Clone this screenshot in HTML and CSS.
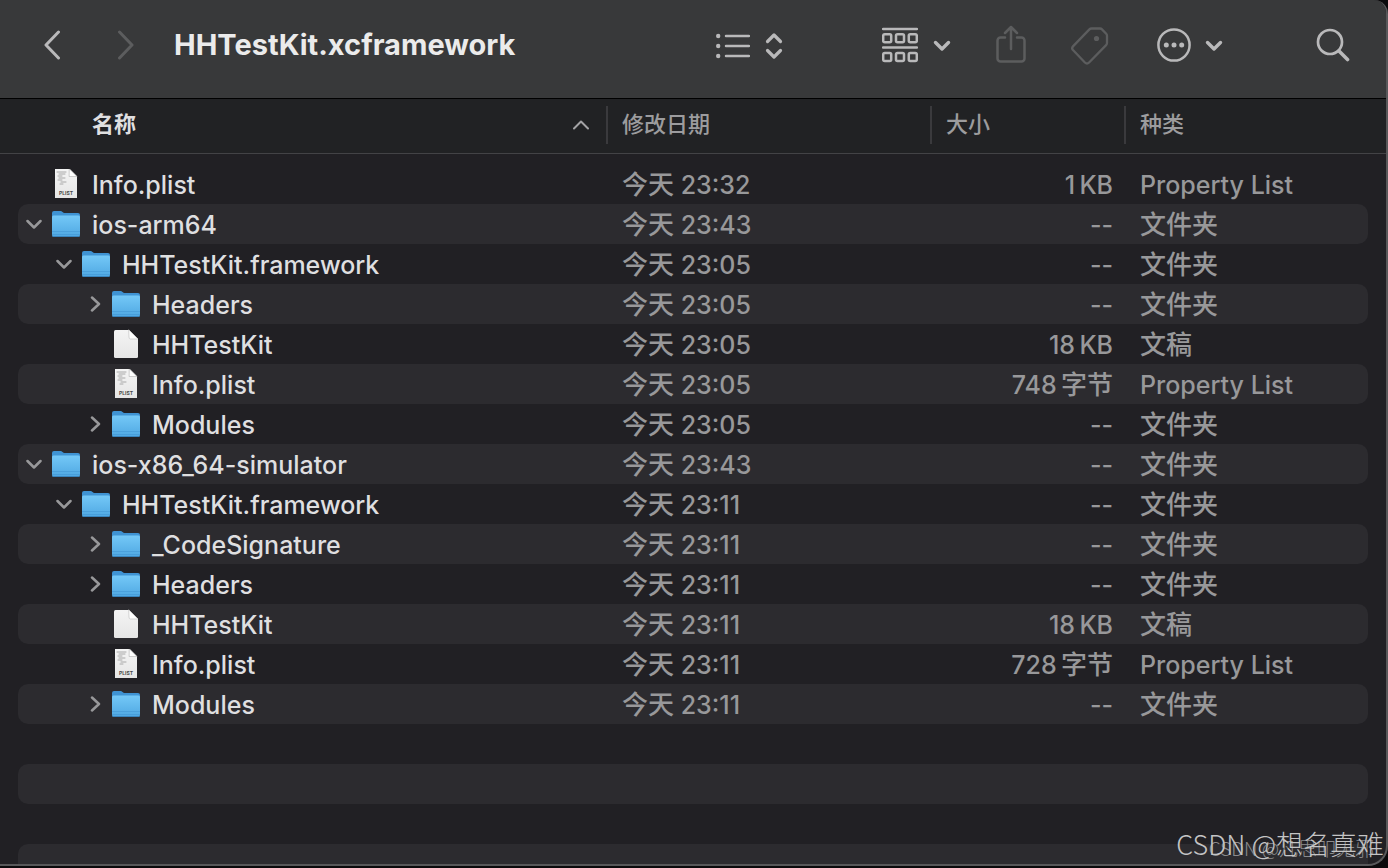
FILE: index.html
```
<!DOCTYPE html>
<html lang="zh-CN">
<head>
    <meta charset="UTF-8">
    <meta name="viewport" content="width=device-width, initial-scale=1.0">
    <title>HHTestKit.xcframework</title>
    <link rel="stylesheet" href="styles.css">
</head>
<body>
    <!-- shared icons -->
    <svg width="0" height="0" class="defs" aria-hidden="true">
        <defs>
            <linearGradient id="folder-fill" x1="0" y1="0" x2="0" y2="1">
                <stop offset="0" stop-color="#74c8f7" />
                <stop offset="1" stop-color="#4fa8e2" />
            </linearGradient>
            <linearGradient id="paper-fill" x1="0" y1="0" x2="0" y2="1">
                <stop offset="0" stop-color="#f4f4f4" />
                <stop offset="1" stop-color="#e6e6e6" />
            </linearGradient>
            <symbol id="folder" viewBox="0 0 28 30">
                <path d="M0 4a2 2 0 0 1 2-2h6.500c1.500 0 2.500 2 4 2H26a2 2 0 0 1 2 2v4H0z" fill="#3f93d3" />
                <path d="M0 8a1.500 1.500 0 0 1 1.500-1.500h25A1.500 1.500 0 0 1 28 8V26a2 2 0 0 1-2 2H2a2 2 0 0 1-2-2z" fill="url(#folder-fill)" />
                <path d="M0 22.500h28M0 25.500h28" stroke="#4196d3" stroke-width="0.600" />
                <path d="M1 27.500h26" stroke="#3883bd" />
            </symbol>
            <symbol id="paper" viewBox="0 0 28 30">
                <path d="M3.500 1H17l9 9v17.500A1.500 1.500 0 0 1 24.500 29h-21A1.500 1.500 0 0 1 2 27.500v-25A1.500 1.500 0 0 1 3.500 1z" fill="url(#paper-fill)" />
                <path d="M17 1l9 9h-7.500A1.500 1.500 0 0 1 17 8.500z" fill="#fff" stroke="#c4c4c4" stroke-width="0.700" />
            </symbol>
            <symbol id="plist" viewBox="0 0 28 30">
                <path d="M3 0h14.500l7.500 7.500V29H3z" fill="url(#paper-fill)" />
                <path d="M17.500 0l7.500 7.500h-7.500z" fill="#fff" stroke="#bbb" stroke-width="0.700" />
                <path d="M5 3h9M7 5h6M6 7h4M7 9h6M6 11h4M9 13h5M8 15h3" stroke="#a8a8a8" stroke-width="1" />
                <text x="14" y="26" text-anchor="middle" class="plist-label">PLIST</text>
            </symbol>
            <symbol id="open" viewBox="0 0 16 16">
                <path d="M1.500 5L8 11.500 14.500 5" />
            </symbol>
            <symbol id="closed" viewBox="0 0 16 16">
                <path d="M6 1.500L13 8l-7 6.500" />
            </symbol>
        </defs>
    </svg>

    <main class="window">
        <header class="toolbar">
            <button class="nav-btn" aria-label="Back">
                <svg width="20" height="32" viewBox="0 0 20 32"><path d="M14.500 3L2 16l12.500 13" stroke-width="3" /></svg>
            </button>
            <button class="nav-btn forward disabled" aria-label="Forward" disabled>
                <svg width="20" height="32" viewBox="0 0 20 32"><path d="M5.500 3L18 16 5.500 29" stroke-width="3" /></svg>
            </button>
            <h1>HHTestKit.xcframework</h1>
            <div class="tools">
                <button class="view-btn" aria-label="View">
                    <svg width="34" height="28" viewBox="0 0 34 28">
                        <path d="M10 5h23M10 15h23M10 25h23" stroke-width="2.500" />
                        <g class="solid"><circle cx="2.200" cy="5" r="2.200" /><circle cx="2.200" cy="15" r="2.200" /><circle cx="2.200" cy="25" r="2.200" /></g>
                    </svg>
                    <svg width="18" height="30" viewBox="0 0 18 30"><path d="M2.500 11.500L9 5l6.500 6.500M2.500 20.500L9 27l6.500-6.500" stroke-width="3.200" /></svg>
                </button>
                <button class="group-btn" aria-label="Group">
                    <svg width="36" height="36" viewBox="0 0 36 36">
                        <path d="M1 2h34M1 20.500h34" stroke-width="2.500" />
                        <g stroke-width="2.500">
                            <rect x="1.200" y="7.200" width="8" height="8" rx="1.500" /><rect x="14" y="7.200" width="8" height="8" rx="1.500" /><rect x="26.800" y="7.200" width="8" height="8" rx="1.500" />
                            <rect x="1.200" y="26" width="8" height="8" rx="1.500" /><rect x="14" y="26" width="8" height="8" rx="1.500" /><rect x="26.800" y="26" width="8" height="8" rx="1.500" />
                        </g>
                    </svg>
                    <svg width="18" height="14" viewBox="0 0 18 14"><path d="M2.500 4.500L9 11l6.500-6.500" stroke-width="3.400" /></svg>
                </button>
                <button class="share-btn disabled" aria-label="Share" disabled>
                    <svg width="30" height="40" viewBox="0 0 30 40">
                        <path d="M9 12.500H4.500a3 3 0 0 0-3 3v18a3 3 0 0 0 3 3h21a3 3 0 0 0 3-3v-18a3 3 0 0 0-3-3H21M15 24V2M9 8l6-6 6 6" stroke-width="2.500" />
                    </svg>
                </button>
                <button class="tag-btn disabled" aria-label="Tags" disabled>
                    <svg width="38" height="40" viewBox="0 0 38 40">
                        <path d="M20.500 3.500H29a3 3 0 0 1 2 .900l4.200 4.300a3 3 0 0 1 .800 2v7.300a3 3 0 0 1-.900 2.100L18.100 37.500a3 3 0 0 1-4.200 0L2.200 25.300a3 3 0 0 1 0-4.200L18.400 4.400a3 3 0 0 1 2.100-.900z" stroke-width="2.300" />
                        <circle class="solid" cx="25.500" cy="13.500" r="2.600" />
                    </svg>
                </button>
                <button class="more-btn" aria-label="More">
                    <svg width="34" height="34" viewBox="0 0 34 34">
                        <circle cx="17" cy="17" r="15.600" stroke-width="2.500" />
                        <g class="solid"><circle cx="9.300" cy="17" r="2.500" /><circle cx="17" cy="17" r="2.500" /><circle cx="24.700" cy="17" r="2.500" /></g>
                    </svg>
                    <svg width="18" height="14" viewBox="0 0 18 14"><path d="M2.500 4.500L9 11l6.500-6.500" stroke-width="3.400" /></svg>
                </button>
                <button class="search-btn" aria-label="Search">
                    <svg width="34" height="34" viewBox="0 0 34 34">
                        <circle cx="14" cy="14" r="12" stroke-width="2.700" />
                        <path d="M23 23l8.500 8.500" stroke-width="3.600" />
                    </svg>
                </button>
            </div>
        </header>

        <table class="files">
            <colgroup>
                <col class="col-name">
                <col class="col-date">
                <col class="col-size">
                <col>
            </colgroup>
            <thead>
                <tr>
                    <th class="sorted"><div class="th-inner">名称<svg width="16" height="12" viewBox="0 0 16 12"><path d="M1 10.500l7-7 7 7" /></svg></div></th>
                    <th><div class="th-inner">修改日期</div></th>
                    <th><div class="th-inner">大小</div></th>
                    <th><div class="th-inner">种类</div></th>
                </tr>
            </thead>
            <tbody>
                <tr>
                    <td><div class="name"><span class="toggle"></span><svg class="icon"><use href="#plist" /></svg>Info.plist</div></td>
                    <td><span class="zh">今天</span> 23:32</td><td>1&#8201;KB</td><td>Property List</td>
                </tr>
                <tr>
                    <td><div class="name"><button class="toggle" aria-label="Collapse"><svg><use href="#open" /></svg></button><svg class="icon"><use href="#folder" /></svg>ios-arm64</div></td>
                    <td><span class="zh">今天</span> 23:43</td><td>--</td><td><span class="zh">文件夹</span></td>
                </tr>
                <tr>
                    <td><div class="name depth-1"><button class="toggle" aria-label="Collapse"><svg><use href="#open" /></svg></button><svg class="icon"><use href="#folder" /></svg>HHTestKit.framework</div></td>
                    <td><span class="zh">今天</span> 23:05</td><td>--</td><td><span class="zh">文件夹</span></td>
                </tr>
                <tr>
                    <td><div class="name depth-2"><button class="toggle" aria-label="Expand"><svg><use href="#closed" /></svg></button><svg class="icon"><use href="#folder" /></svg>Headers</div></td>
                    <td><span class="zh">今天</span> 23:05</td><td>--</td><td><span class="zh">文件夹</span></td>
                </tr>
                <tr>
                    <td><div class="name depth-2"><span class="toggle"></span><svg class="icon"><use href="#paper" /></svg>HHTestKit</div></td>
                    <td><span class="zh">今天</span> 23:05</td><td>18&#8201;KB</td><td><span class="zh">文稿</span></td>
                </tr>
                <tr>
                    <td><div class="name depth-2"><span class="toggle"></span><svg class="icon"><use href="#plist" /></svg>Info.plist</div></td>
                    <td><span class="zh">今天</span> 23:05</td><td>748&#8201;<span class="zh">字节</span></td><td>Property List</td>
                </tr>
                <tr>
                    <td><div class="name depth-2"><button class="toggle" aria-label="Expand"><svg><use href="#closed" /></svg></button><svg class="icon"><use href="#folder" /></svg>Modules</div></td>
                    <td><span class="zh">今天</span> 23:05</td><td>--</td><td><span class="zh">文件夹</span></td>
                </tr>
                <tr>
                    <td><div class="name"><button class="toggle" aria-label="Collapse"><svg><use href="#open" /></svg></button><svg class="icon"><use href="#folder" /></svg>ios-x86_64-simulator</div></td>
                    <td><span class="zh">今天</span> 23:43</td><td>--</td><td><span class="zh">文件夹</span></td>
                </tr>
                <tr>
                    <td><div class="name depth-1"><button class="toggle" aria-label="Collapse"><svg><use href="#open" /></svg></button><svg class="icon"><use href="#folder" /></svg>HHTestKit.framework</div></td>
                    <td><span class="zh">今天</span> 23:11</td><td>--</td><td><span class="zh">文件夹</span></td>
                </tr>
                <tr>
                    <td><div class="name depth-2"><button class="toggle" aria-label="Expand"><svg><use href="#closed" /></svg></button><svg class="icon"><use href="#folder" /></svg>_CodeSignature</div></td>
                    <td><span class="zh">今天</span> 23:11</td><td>--</td><td><span class="zh">文件夹</span></td>
                </tr>
                <tr>
                    <td><div class="name depth-2"><button class="toggle" aria-label="Expand"><svg><use href="#closed" /></svg></button><svg class="icon"><use href="#folder" /></svg>Headers</div></td>
                    <td><span class="zh">今天</span> 23:11</td><td>--</td><td><span class="zh">文件夹</span></td>
                </tr>
                <tr>
                    <td><div class="name depth-2"><span class="toggle"></span><svg class="icon"><use href="#paper" /></svg>HHTestKit</div></td>
                    <td><span class="zh">今天</span> 23:11</td><td>18&#8201;KB</td><td><span class="zh">文稿</span></td>
                </tr>
                <tr>
                    <td><div class="name depth-2"><span class="toggle"></span><svg class="icon"><use href="#plist" /></svg>Info.plist</div></td>
                    <td><span class="zh">今天</span> 23:11</td><td>728&#8201;<span class="zh">字节</span></td><td>Property List</td>
                </tr>
                <tr>
                    <td><div class="name depth-2"><button class="toggle" aria-label="Expand"><svg><use href="#closed" /></svg></button><svg class="icon"><use href="#folder" /></svg>Modules</div></td>
                    <td><span class="zh">今天</span> 23:11</td><td>--</td><td><span class="zh">文件夹</span></td>
                </tr>
                <!-- empty stripes below the list -->
                <tr><td></td><td></td><td></td><td></td></tr>
                <tr><td></td><td></td><td></td><td></td></tr>
                <tr><td></td><td></td><td></td><td></td></tr>
                <tr><td></td><td></td><td></td><td></td></tr>
            </tbody>
        </table>
    </main>

    <div class="watermark small">CSDN @凡思叩无邪</div>
    <div class="watermark">CSDN @想名真难</div>
</body>
</html>
```
FILE: styles.css
```
* {
    box-sizing: border-box;
}
body {
    margin: 0;
    height: 100vh;
    padding-bottom: 2px;
    overflow: hidden;
    background-color: #0b0a0c;
    color: #dfdfe0;
    font-family: Inter, "Noto Sans CJK SC", sans-serif;
    font-size: 25px;
    font-weight: 500;
}
.defs {
    position: absolute;
}
svg {
    fill: none;
    stroke-linecap: round;
    stroke-linejoin: round;
    flex-shrink: 0;
}
button {
    display: flex;
    align-items: center;
    padding: 0;
    border: none;
    background: none;
    color: inherit;
}
.window {
    height: 100%;
    overflow: hidden;
    background-color: #212024;
    border-right: 2px solid #58585a;
    border-bottom: 2px solid #58585a;
    border-radius: 0 14px 20px 0;
}

/* toolbar */
.toolbar {
    display: flex;
    align-items: center;
    height: 99px;
    padding: 0 36px 8px 44px;
    background-color: #38393a;
    border-bottom: 1px solid #000;
    color: #b9b9ba;
}
.toolbar svg {
    stroke: currentColor;
}
.toolbar .solid {
    fill: currentColor;
    stroke: none;
}
.toolbar .disabled {
    color: #5c5d5e;
}
.forward {
    margin-left: 50px;
}
.toolbar h1 {
    margin: 0 0 0 40px;
    color: #ebebeb;
    font-size: 29px;
    line-height: 40px;
    font-weight: 700;
}
.tools {
    display: flex;
    align-items: center;
    margin-left: auto;
}
.view-btn {
    gap: 15px;
}
.group-btn {
    gap: 15px;
    margin-left: 99px;
}
.share-btn {
    margin-left: 45px;
}
.tag-btn {
    margin-left: 45px;
}
.more-btn {
    gap: 14px;
    margin-left: 48px;
}
.search-btn {
    margin-left: 93px;
}

/* file list */
.files {
    width: 100%;
    table-layout: fixed;
    border-collapse: separate;
    border-spacing: 0;
}
.col-name {
    width: 606px;
}
.col-date {
    width: 324px;
}
.col-size {
    width: 194px;
}
.files th {
    height: 55px;
    padding: 0 0 2px;
    background-color: #212224;
    border-bottom: 1px solid #434346;
    color: #9c9c9e;
    font-size: 22px;
    line-height: 36px;
    font-weight: 500;
    text-align: left;
}
.th-inner {
    display: flex;
    align-items: center;
    justify-content: space-between;
    height: 38px;
    padding: 0 0 2px 14px;
    border-left: 2px solid #3a3a3d;
}
.files .sorted {
    color: #dfdfe0;
    font-weight: 700;
}
.sorted .th-inner {
    padding: 0 17px 2px 92px;
    border-left: none;
}
.sorted svg {
    stroke: #a3a3a5;
    stroke-width: 2;
}
.files tbody::before {
    content: "";
    display: block;
    height: 10px;
}
.files td {
    height: 40px;
    padding: 2px 0 0 16px;
    color: #98989a;
    line-height: 38px;
    white-space: nowrap;
}
.files td:first-child {
    padding: 0;
    border-left: 18px solid transparent;
    border-radius: 28px 0 0 28px / 10px 0 0 10px;
    background-clip: padding-box;
    color: #dfdfe0;
}
.files td:nth-child(3) {
    padding-right: 11px;
    text-align: right;
}
.files td:last-child {
    border-right: 18px solid transparent;
    border-radius: 0 28px 28px 0 / 0 10px 10px 0;
    background-clip: padding-box;
}
.files tbody tr:nth-child(even) td {
    background-color: #2c2b2f;
}
.name {
    display: flex;
    align-items: center;
    height: 40px;
    padding: 2px 0 0 8px;
}
.depth-1 {
    padding-left: 38px;
}
.depth-2 {
    padding-left: 68px;
}
.toggle {
    width: 16px;
    height: 16px;
    margin: 0 10px 2px 0;
}
.toggle svg {
    width: 16px;
    height: 16px;
    stroke: #98989a;
    stroke-width: 2.5px;
}
.icon {
    width: 28px;
    height: 30px;
    margin: 0 12px 2px 0;
}
.plist-label {
    fill: #4a4a4a;
    font-size: 5px;
    font-weight: 700;
}
.zh {
    font-size: 26px;
    line-height: 20px;
}

/* watermarks lie over the window corner */
.watermark {
    position: absolute;
    right: 4px;
    bottom: 4px;
    color: #c4c4c5;
    font-family: "Noto Sans CJK SC", sans-serif;
    font-size: 27px;
    font-weight: 300;
    line-height: 40px;
}
.watermark.small {
    right: 14px;
    bottom: 0;
    color: #8b8b8d;
    font-size: 19px;
}
```
